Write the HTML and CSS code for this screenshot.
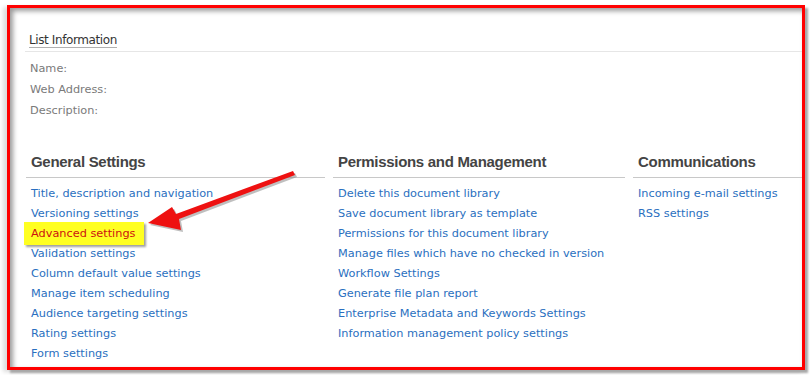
FILE: index.html
```html
<!DOCTYPE html>
<html>
<head>
<meta charset="utf-8">
<link rel="stylesheet" href="styles.css">
</head>
<body>
<div class="frame">
  <div class="info">
    <div class="info-head"><span class="info-title">List Information</span></div>
    <div class="info-rows">
      <div class="label">Name:</div>
      <div class="label">Web Address:</div>
      <div class="label">Description:</div>
    </div>
  </div>
  <div class="cols">
    <div class="col col1">
      <h2 class="col-head">General Settings</h2>
      <ul class="links">
        <li><a>Title, description and navigation</a></li>
        <li><a>Versioning settings</a></li>
        <li class="hl"><a>Advanced settings</a></li>
        <li><a>Validation settings</a></li>
        <li><a>Column default value settings</a></li>
        <li><a>Manage item scheduling</a></li>
        <li><a>Audience targeting settings</a></li>
        <li><a>Rating settings</a></li>
        <li><a>Form settings</a></li>
      </ul>
    </div>
    <div class="col col2">
      <h2 class="col-head">Permissions and Management</h2>
      <ul class="links">
        <li><a>Delete this document library</a></li>
        <li><a>Save document library as template</a></li>
        <li><a>Permissions for this document library</a></li>
        <li><a>Manage files which have no checked in version</a></li>
        <li><a>Workflow Settings</a></li>
        <li><a>Generate file plan report</a></li>
        <li><a>Enterprise Metadata and Keywords Settings</a></li>
        <li><a>Information management policy settings</a></li>
      </ul>
    </div>
    <div class="col col3">
      <h2 class="col-head">Communications</h2>
      <ul class="links">
        <li><a>Incoming e-mail settings</a></li>
        <li><a>RSS settings</a></li>
      </ul>
    </div>
  </div>
</div>
<svg class="arrow" width="811" height="375" viewBox="0 0 811 375">
  <polygon fill="#8a8a8a" opacity="0.55" transform="translate(2,2)" points="293,171 295,175 179,219 181,230 148,223 172,207 176,214"/>
  <polygon fill="#ee1111" points="293,171 295,175 179,219 181,230 148,223 172,207 176,214"/>
</svg>
</body>
</html>
```
FILE: styles.css
```css
html, body {
  margin: 0;
  padding: 0;
}
body {
  width: 811px;
  height: 375px;
  background: #ffffff;
  position: relative;
  overflow: hidden;
}
.frame {
  position: relative;
  margin: 5px 0 0 7px;
  width: 792px;
  height: 359px;
  border: 3px solid #ff0000;
  background: #ffffff;
  box-shadow: inset 3px 3px 5px #9a9a9a, 3px 3px 2px #a8a8a8, -4px 2px 4px #dddddd;
  font-family: "DejaVu Sans", Verdana, sans-serif;
}
.info {
  padding: 26px 0 0 15px;
}
.info-head {
  display: flex;
  align-items: flex-start;
  border-bottom: 1px solid #e6e6e6;
  padding-left: 4px;
  height: 17px;
}
.info-title {
  font-family: "DejaVu Sans", sans-serif;
  font-size: 12px;
  letter-spacing: -0.4px;
  color: #333333;
  line-height: 13px;
  border-bottom: 1px solid #b0b0b0;
}
.info-rows {
  padding: 6px 0 0 5px;
}
.label {
  font-size: 11.3px;
  color: #7a7a7a;
  line-height: 21px;
}
.cols {
  display: flex;
  gap: 8px;
  margin-top: 31px;
  padding-left: 16px;
}
.col1 { width: 299px; }
.col2 { width: 292px; }
.col3 { flex: 1; }
.col-head {
  margin: 0;
  font-family: "Liberation Sans", Arial, sans-serif;
  font-weight: bold;
  font-size: 15px;
  letter-spacing: -0.3px;
  color: #444444;
  line-height: 20px;
  padding: 0 0 5px 5px;
  border-bottom: 1px solid #c8c8c8;
}
.links {
  list-style: none;
  margin: 6px 0 0 0;
  padding: 0;
}
.links li {
  font-size: 11.3px;
  line-height: 20px;
  padding-left: 5px;
}
.links a {
  color: #2a6fc0;
}
.links li.hl {
  margin-left: -2px;
  padding-left: 7px;
  width: 113px;
  height: 23px;
  line-height: 23px;
  margin-top: -2px;
  margin-bottom: -1px;
  background: #ffff22;
  box-shadow: 2px 2px 2px #a0a0a0;
}
.links li.hl a {
  color: #cc1111;
}
.arrow {
  position: absolute;
  left: 0;
  top: 0;
  pointer-events: none;
}
```
